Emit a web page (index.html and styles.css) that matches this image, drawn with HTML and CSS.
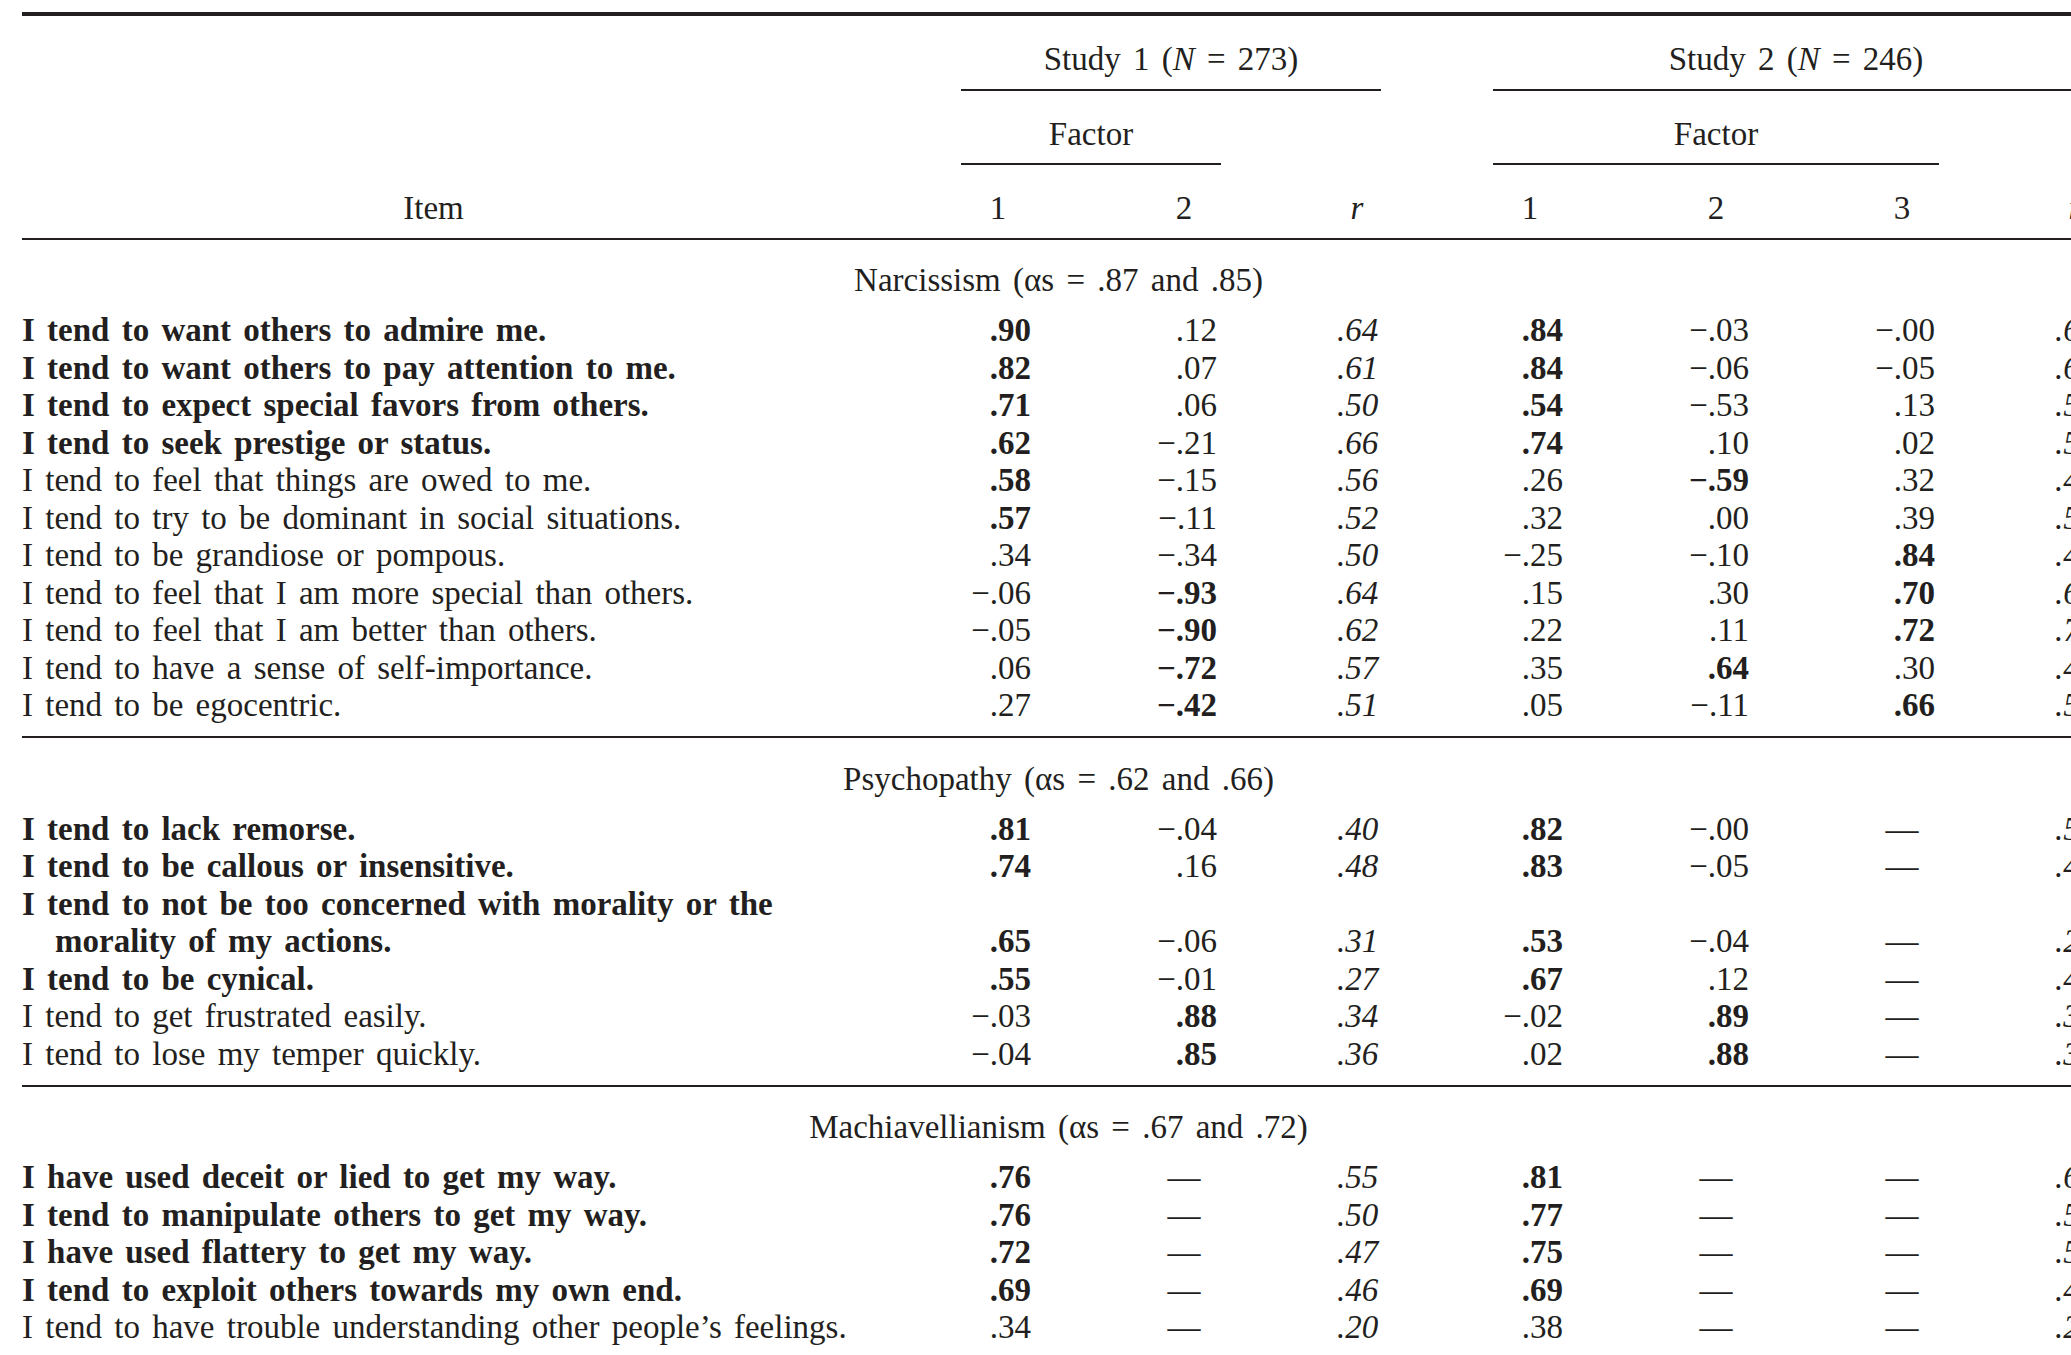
FILE: index.html
```html
<!DOCTYPE html>
<html lang="en">
<head>
    <meta charset="UTF-8">
    <title>Factor loadings of the Dirty Dozen items</title>
    <link rel="stylesheet" href="styles.css">
</head>
<body>
    <div class="table">
        <div class="head">
            <div class="head-cell group study1">Study 1 (<i>N</i> = 273)</div>
            <div class="head-cell group study2">Study 2 (<i>N</i> = 246)</div>
            <div class="head-cell group factor1">Factor</div>
            <div class="head-cell group factor2">Factor</div>
            <div class="head-cell last">Item</div>
            <div class="head-cell last">1</div>
            <div class="head-cell last">2</div>
            <div class="head-cell last"><i>r</i></div>
            <div class="head-cell last">1</div>
            <div class="head-cell last">2</div>
            <div class="head-cell last">3</div>
            <div class="head-cell last"><i>r</i></div>
        </div>

        <div class="section">
            <div class="section-title">Narcissism (&alpha;s = .87 and .85)</div>
            <div class="row"><div class="item b">I tend to want others to admire me.</div><div class="num b">.90</div><div class="num">.12</div><div class="num r">.64</div><div class="num b">.84</div><div class="num">&minus;.03</div><div class="num">&minus;.00</div><div class="num r">.66</div></div>
            <div class="row"><div class="item b">I tend to want others to pay attention to me.</div><div class="num b">.82</div><div class="num">.07</div><div class="num r">.61</div><div class="num b">.84</div><div class="num">&minus;.06</div><div class="num">&minus;.05</div><div class="num r">.63</div></div>
            <div class="row"><div class="item b">I tend to expect special favors from others.</div><div class="num b">.71</div><div class="num">.06</div><div class="num r">.50</div><div class="num b">.54</div><div class="num">&minus;.53</div><div class="num">.13</div><div class="num r">.55</div></div>
            <div class="row"><div class="item b">I tend to seek prestige or status.</div><div class="num b">.62</div><div class="num">&minus;.21</div><div class="num r">.66</div><div class="num b">.74</div><div class="num">.10</div><div class="num">.02</div><div class="num r">.56</div></div>
            <div class="row"><div class="item">I tend to feel that things are owed to me.</div><div class="num b">.58</div><div class="num">&minus;.15</div><div class="num r">.56</div><div class="num">.26</div><div class="num b">&minus;.59</div><div class="num">.32</div><div class="num r">.45</div></div>
            <div class="row"><div class="item">I tend to try to be dominant in social situations.</div><div class="num b">.57</div><div class="num">&minus;.11</div><div class="num r">.52</div><div class="num">.32</div><div class="num">.00</div><div class="num">.39</div><div class="num r">.51</div></div>
            <div class="row"><div class="item">I tend to be grandiose or pompous.</div><div class="num">.34</div><div class="num">&minus;.34</div><div class="num r">.50</div><div class="num">&minus;.25</div><div class="num">&minus;.10</div><div class="num b">.84</div><div class="num r">.47</div></div>
            <div class="row"><div class="item">I tend to feel that I am more special than others.</div><div class="num">&minus;.06</div><div class="num b">&minus;.93</div><div class="num r">.64</div><div class="num">.15</div><div class="num">.30</div><div class="num b">.70</div><div class="num r">.62</div></div>
            <div class="row"><div class="item">I tend to feel that I am better than others.</div><div class="num">&minus;.05</div><div class="num b">&minus;.90</div><div class="num r">.62</div><div class="num">.22</div><div class="num">.11</div><div class="num b">.72</div><div class="num r">.70</div></div>
            <div class="row"><div class="item">I tend to have a sense of self-importance.</div><div class="num">.06</div><div class="num b">&minus;.72</div><div class="num r">.57</div><div class="num">.35</div><div class="num b">.64</div><div class="num">.30</div><div class="num r">.48</div></div>
            <div class="row"><div class="item">I tend to be egocentric.</div><div class="num">.27</div><div class="num b">&minus;.42</div><div class="num r">.51</div><div class="num">.05</div><div class="num">&minus;.11</div><div class="num b">.66</div><div class="num r">.53</div></div>
        </div>

        <div class="section">
            <div class="section-title">Psychopathy (&alpha;s = .62 and .66)</div>
            <div class="row"><div class="item b">I tend to lack remorse.</div><div class="num b">.81</div><div class="num">&minus;.04</div><div class="num r">.40</div><div class="num b">.82</div><div class="num">&minus;.00</div><div class="num dash">&mdash;</div><div class="num r">.52</div></div>
            <div class="row"><div class="item b">I tend to be callous or insensitive.</div><div class="num b">.74</div><div class="num">.16</div><div class="num r">.48</div><div class="num b">.83</div><div class="num">&minus;.05</div><div class="num dash">&mdash;</div><div class="num r">.46</div></div>
            <div class="row"><div class="item b">I tend to not be too concerned with morality or the<br>morality of my actions.</div><div class="num b">.65</div><div class="num">&minus;.06</div><div class="num r">.31</div><div class="num b">.53</div><div class="num">&minus;.04</div><div class="num dash">&mdash;</div><div class="num r">.27</div></div>
            <div class="row"><div class="item b">I tend to be cynical.</div><div class="num b">.55</div><div class="num">&minus;.01</div><div class="num r">.27</div><div class="num b">.67</div><div class="num">.12</div><div class="num dash">&mdash;</div><div class="num r">.41</div></div>
            <div class="row"><div class="item">I tend to get frustrated easily.</div><div class="num">&minus;.03</div><div class="num b">.88</div><div class="num r">.34</div><div class="num">&minus;.02</div><div class="num b">.89</div><div class="num dash">&mdash;</div><div class="num r">.35</div></div>
            <div class="row"><div class="item">I tend to lose my temper quickly.</div><div class="num">&minus;.04</div><div class="num b">.85</div><div class="num r">.36</div><div class="num">.02</div><div class="num b">.88</div><div class="num dash">&mdash;</div><div class="num r">.33</div></div>
        </div>

        <div class="section">
            <div class="section-title">Machiavellianism (&alpha;s = .67 and .72)</div>
            <div class="row"><div class="item b">I have used deceit or lied to get my way.</div><div class="num b">.76</div><div class="num dash">&mdash;</div><div class="num r">.55</div><div class="num b">.81</div><div class="num dash">&mdash;</div><div class="num dash">&mdash;</div><div class="num r">.64</div></div>
            <div class="row"><div class="item b">I tend to manipulate others to get my way.</div><div class="num b">.76</div><div class="num dash">&mdash;</div><div class="num r">.50</div><div class="num b">.77</div><div class="num dash">&mdash;</div><div class="num dash">&mdash;</div><div class="num r">.58</div></div>
            <div class="row"><div class="item b">I have used flattery to get my way.</div><div class="num b">.72</div><div class="num dash">&mdash;</div><div class="num r">.47</div><div class="num b">.75</div><div class="num dash">&mdash;</div><div class="num dash">&mdash;</div><div class="num r">.55</div></div>
            <div class="row"><div class="item b">I tend to exploit others towards my own end.</div><div class="num b">.69</div><div class="num dash">&mdash;</div><div class="num r">.46</div><div class="num b">.69</div><div class="num dash">&mdash;</div><div class="num dash">&mdash;</div><div class="num r">.47</div></div>
            <div class="row"><div class="item">I tend to have trouble understanding other people&rsquo;s feelings.</div><div class="num">.34</div><div class="num dash">&mdash;</div><div class="num r">.20</div><div class="num">.38</div><div class="num dash">&mdash;</div><div class="num dash">&mdash;</div><div class="num r">.26</div></div>
        </div>
    </div>
</body>
</html>
```

FILE: styles.css
```css
html, body {
    margin: 0;
    padding: 0;
    background-color: #fff;
    overflow: hidden;
}

body {
    padding-top: 12px;
    font-family: "Liberation Serif", "Times New Roman", serif;
    font-size: 33px;
    color: #231f20;
    word-spacing: 4px;
}

.table {
    margin-left: 22px;
    width: 2073px;
    border-top: 4px solid #231f20;
}

.head,
.row {
    display: grid;
    grid-template-columns: 823px 66px 66px 40px 66px 66px 66px 40px;
    column-gap: 120px;
}

.head {
    border-bottom: 2px solid #231f20;
}

.head-cell {
    padding: 25px 0 10px;
    line-height: 37.5px;
    text-align: center;
    white-space: nowrap;
}

.group {
    border-bottom: 2px solid #231f20;
    margin: 0 -4px;
}

.study1 { grid-row: 1; grid-column: 2 / 5; }
.study2 { grid-row: 1; grid-column: 5 / 9; }
.factor1 { grid-row: 2; grid-column: 2 / 4; }
.factor2 { grid-row: 2; grid-column: 5 / 8; }
.last { grid-row: 3; }

.section {
    padding: 22.5px 0 11.5px;
}

.section + .section {
    border-top: 2px solid #231f20;
}

.section-title {
    line-height: 37.5px;
    text-align: center;
    padding-bottom: 12.5px;
}

.row {
    line-height: 37.5px;
    align-items: end;
}

.item {
    white-space: nowrap;
    padding-left: 33px;
    text-indent: -33px;
}

.num {
    text-align: right;
    white-space: nowrap;
}

.num.dash {
    text-align: center;
}

.b {
    font-weight: bold;
}

.r {
    font-style: italic;
}
```
